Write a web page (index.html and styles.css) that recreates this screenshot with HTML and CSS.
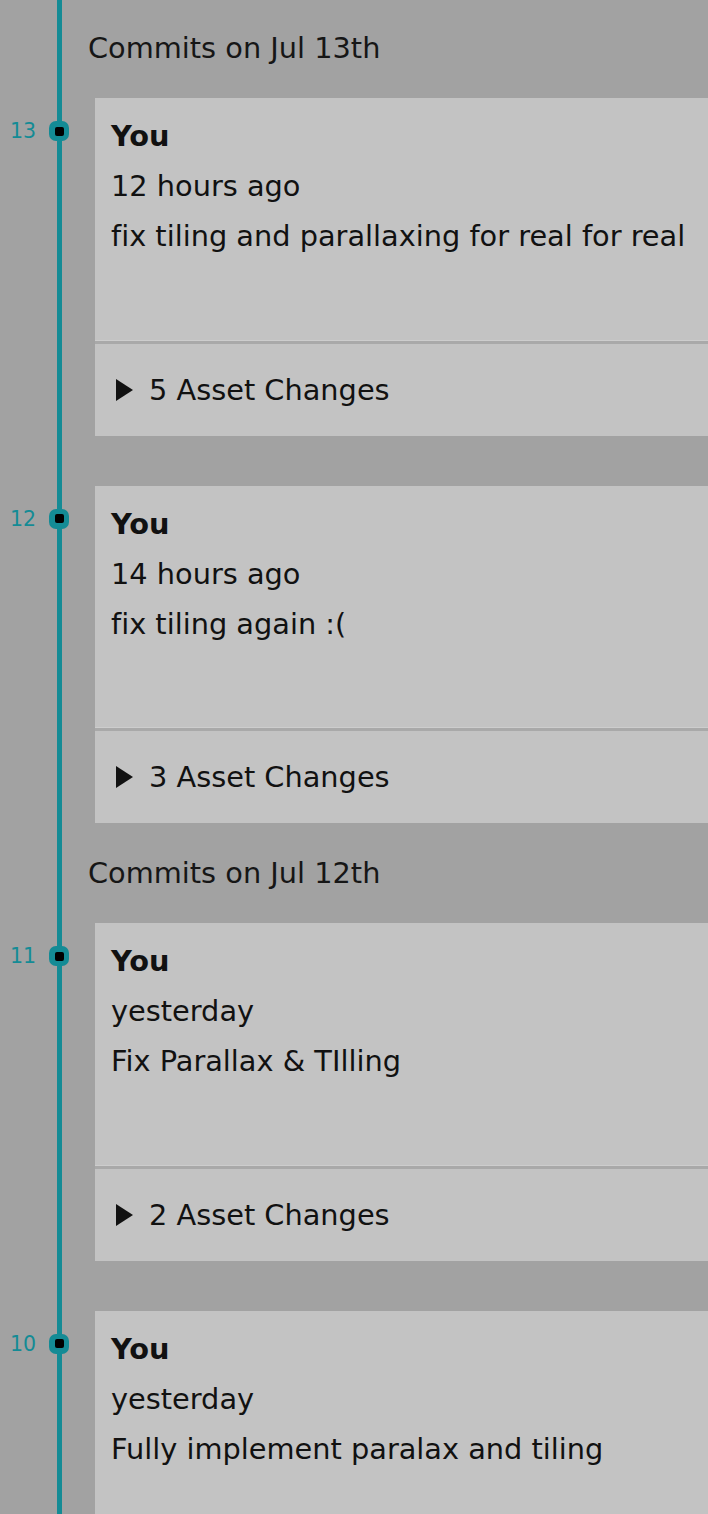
FILE: index.html
```html
<!DOCTYPE html>
<html lang="en">
<head>
<meta charset="utf-8">
<title>Commits</title>
<link rel="stylesheet" href="styles.css">
</head>
<body>
<div class="timeline">
  <section class="day">
    <h2 class="day-head">Commits on Jul 13th</h2>
    <div class="commits">
      <div class="commit">
        <div class="gutter"><span class="num">13</span><span class="dot"></span></div>
        <div class="card">
          <div class="card-body">
            <div class="author">You</div>
            <div class="line">12 hours ago</div>
            <div class="line">fix tiling and parallaxing for real for real</div>
          </div>
          <div class="changes"><span class="tri"></span>5 Asset Changes</div>
        </div>
      </div>
      <div class="commit">
        <div class="gutter"><span class="num">12</span><span class="dot"></span></div>
        <div class="card">
          <div class="card-body">
            <div class="author">You</div>
            <div class="line">14 hours ago</div>
            <div class="line">fix tiling again :(</div>
          </div>
          <div class="changes"><span class="tri"></span>3 Asset Changes</div>
        </div>
      </div>
    </div>
  </section>
  <section class="day">
    <h2 class="day-head">Commits on Jul 12th</h2>
    <div class="commits">
      <div class="commit">
        <div class="gutter"><span class="num">11</span><span class="dot"></span></div>
        <div class="card">
          <div class="card-body">
            <div class="author">You</div>
            <div class="line">yesterday</div>
            <div class="line">Fix Parallax &amp; TIlling</div>
          </div>
          <div class="changes"><span class="tri"></span>2 Asset Changes</div>
        </div>
      </div>
      <div class="commit">
        <div class="gutter"><span class="num">10</span><span class="dot"></span></div>
        <div class="card">
          <div class="card-body card-last">
            <div class="author">You</div>
            <div class="line">yesterday</div>
            <div class="line">Fully implement paralax and tiling</div>
          </div>
        </div>
      </div>
    </div>
  </section>
</div>
</body>
</html>
```
FILE: styles.css
```css
html {
  overflow: hidden;
  background: #a2a2a2;
}
body {
  margin: 0;
  font-family: "DejaVu Sans", Verdana, sans-serif;
  font-size: 28.8px;
  line-height: 50px;
  color: #111111;
  font-variant-ligatures: none;
}
.timeline {
  margin-top: -2px;
  height: 1516px;
  overflow: hidden;
  background:
    linear-gradient(#148b95, #148b95) 57px 0 / 5px 100% no-repeat,
    #a2a2a2;
}
.day-head {
  margin: 0;
  padding: 25px 0 25px 88px;
  font-size: 28.8px;
  font-weight: normal;
  line-height: 50px;
  color: #161616;
}
.commits {
  display: flex;
  flex-direction: column;
  gap: 50px;
}
.commit {
  display: grid;
  grid-template-columns: 95px 1fr;
}
.gutter {
  display: flex;
  align-items: center;
  height: 20px;
  margin-top: 23px;
}
.num {
  width: 36px;
  text-align: right;
  font-size: 20.5px;
  line-height: 20px;
  color: #148b95;
}
.dot {
  flex: none;
  width: 20px;
  height: 20px;
  margin-left: 13px;
  border-radius: 7px;
  background: #148b95;
  display: flex;
  align-items: center;
  justify-content: center;
}
.dot::after {
  content: "";
  width: 9px;
  height: 9px;
  border-radius: 2px;
  background: #000000;
}
.card {
  background: #c3c3c3;
}
.card-body {
  padding: 13px 16px 79.5px;
  box-shadow: inset 0 -4px 0 -3px #cdcdcd;
}
.card-last {
  padding-bottom: 60px;
  box-shadow: none;
}
.author {
  font-weight: bold;
}
.changes {
  display: flex;
  align-items: center;
  gap: 16px;
  padding: 21px;
  border-top: 3px solid #a9a9a9;
}
.tri {
  width: 0;
  height: 0;
  border-left: 17px solid #111111;
  border-top: 11px solid transparent;
  border-bottom: 11px solid transparent;
}
```
